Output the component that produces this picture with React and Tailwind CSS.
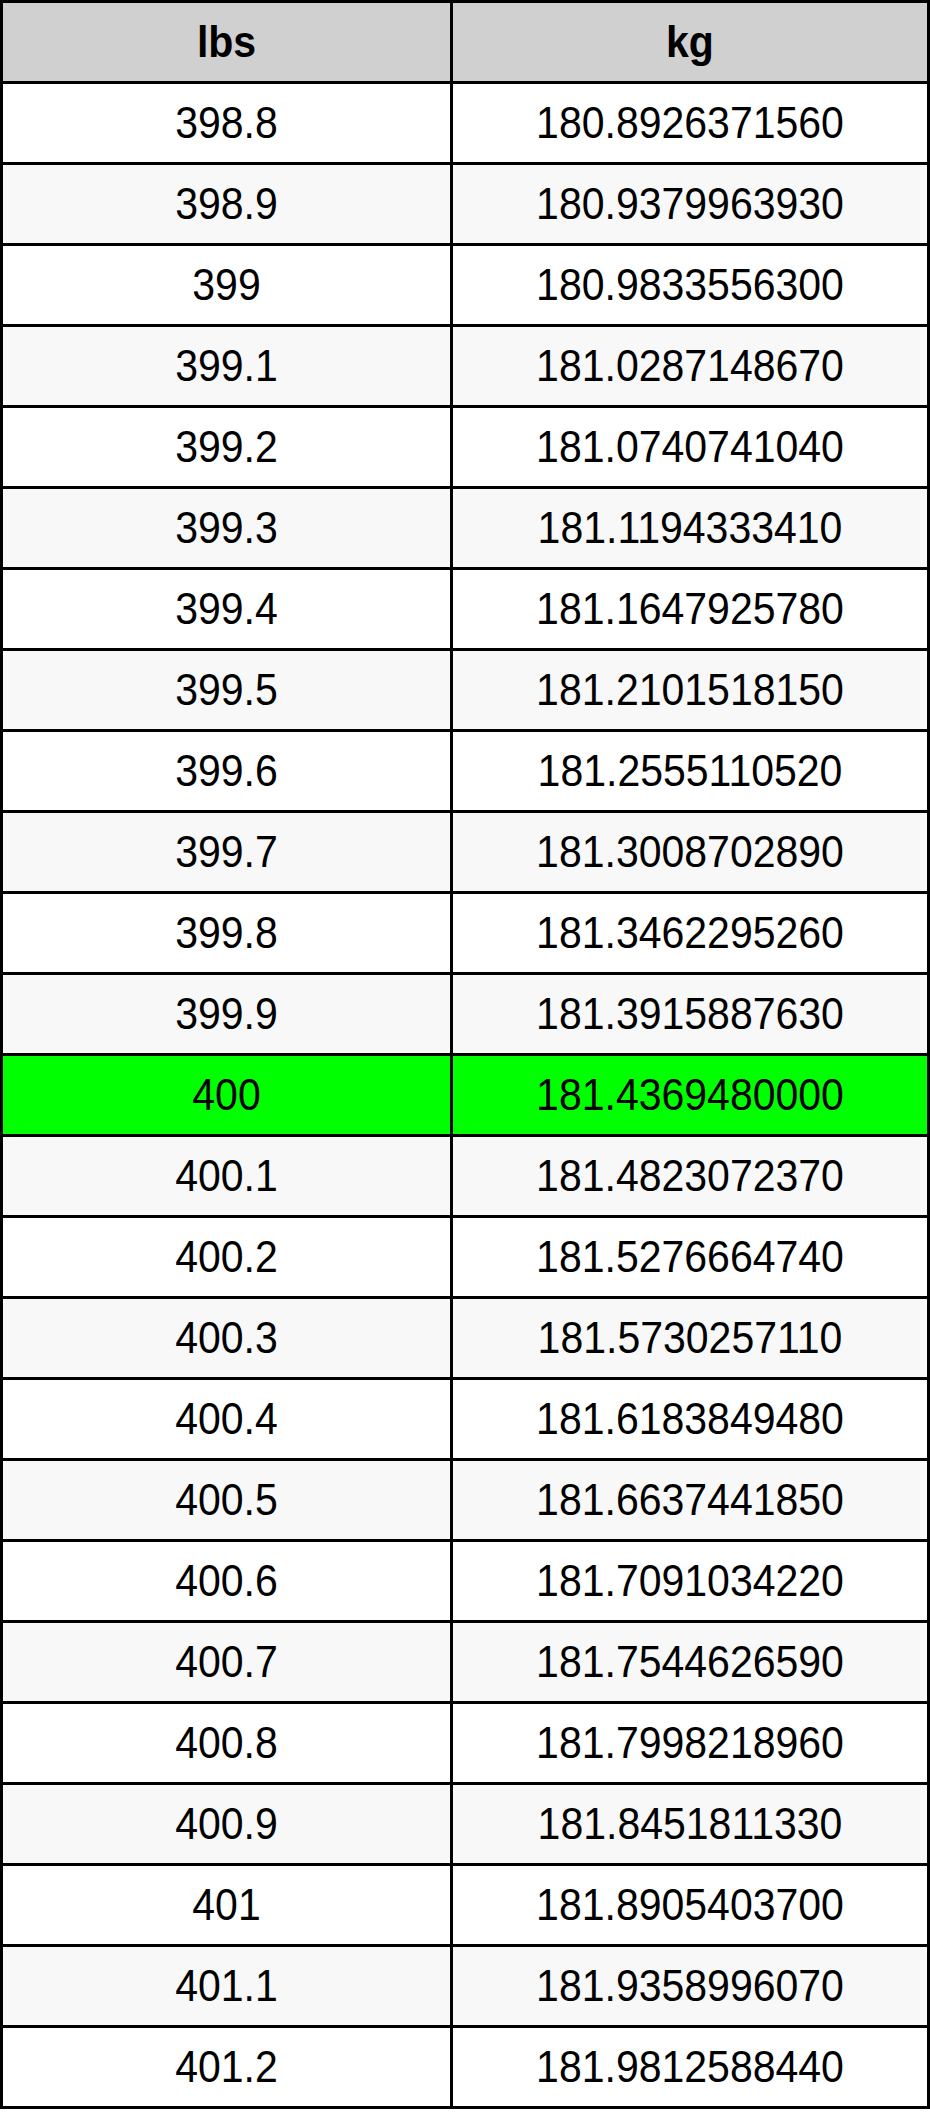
const rows = [
  ["398.8", "180.8926371560"],
  ["398.9", "180.9379963930"],
  ["399", "180.9833556300"],
  ["399.1", "181.0287148670"],
  ["399.2", "181.0740741040"],
  ["399.3", "181.1194333410"],
  ["399.4", "181.1647925780"],
  ["399.5", "181.2101518150"],
  ["399.6", "181.2555110520"],
  ["399.7", "181.3008702890"],
  ["399.8", "181.3462295260"],
  ["399.9", "181.3915887630"],
  ["400", "181.4369480000"],
  ["400.1", "181.4823072370"],
  ["400.2", "181.5276664740"],
  ["400.3", "181.5730257110"],
  ["400.4", "181.6183849480"],
  ["400.5", "181.6637441850"],
  ["400.6", "181.7091034220"],
  ["400.7", "181.7544626590"],
  ["400.8", "181.7998218960"],
  ["400.9", "181.8451811330"],
  ["401", "181.8905403700"],
  ["401.1", "181.9358996070"],
  ["401.2", "181.9812588440"],
];

function Cell({ children, left }) {
  return (
    <div
      className={`${left ? "w-[450px]" : "flex-1"} flex items-center justify-center border-r-[3px] border-b-[3px] border-black`}
    >
      <span className="inline-block scale-y-[1.08]">{children}</span>
    </div>
  );
}

export default function App() {
  return (
    <div className="w-[930px] bg-white" style={{ fontFamily: '"Liberation Sans", Arial, sans-serif' }}>
      <div className="border-l-[3px] border-t-[3px] border-black text-black text-[41px] leading-none">
        <div className="flex h-[81px] bg-[#d0d0d0] font-bold">
          <Cell left>lbs</Cell>
          <Cell>kg</Cell>
        </div>
        {rows.map(([a, b], i) => {
          const bg = a === "400" ? "bg-[#00ff00]" : i % 2 === 0 ? "bg-white" : "bg-[#f8f8f8]";
          return (
            <div key={a} className={`flex h-[81px] ${bg}`}>
              <Cell left>{a}</Cell>
              <Cell>{b}</Cell>
            </div>
          );
        })}
      </div>
    </div>
  );
}
